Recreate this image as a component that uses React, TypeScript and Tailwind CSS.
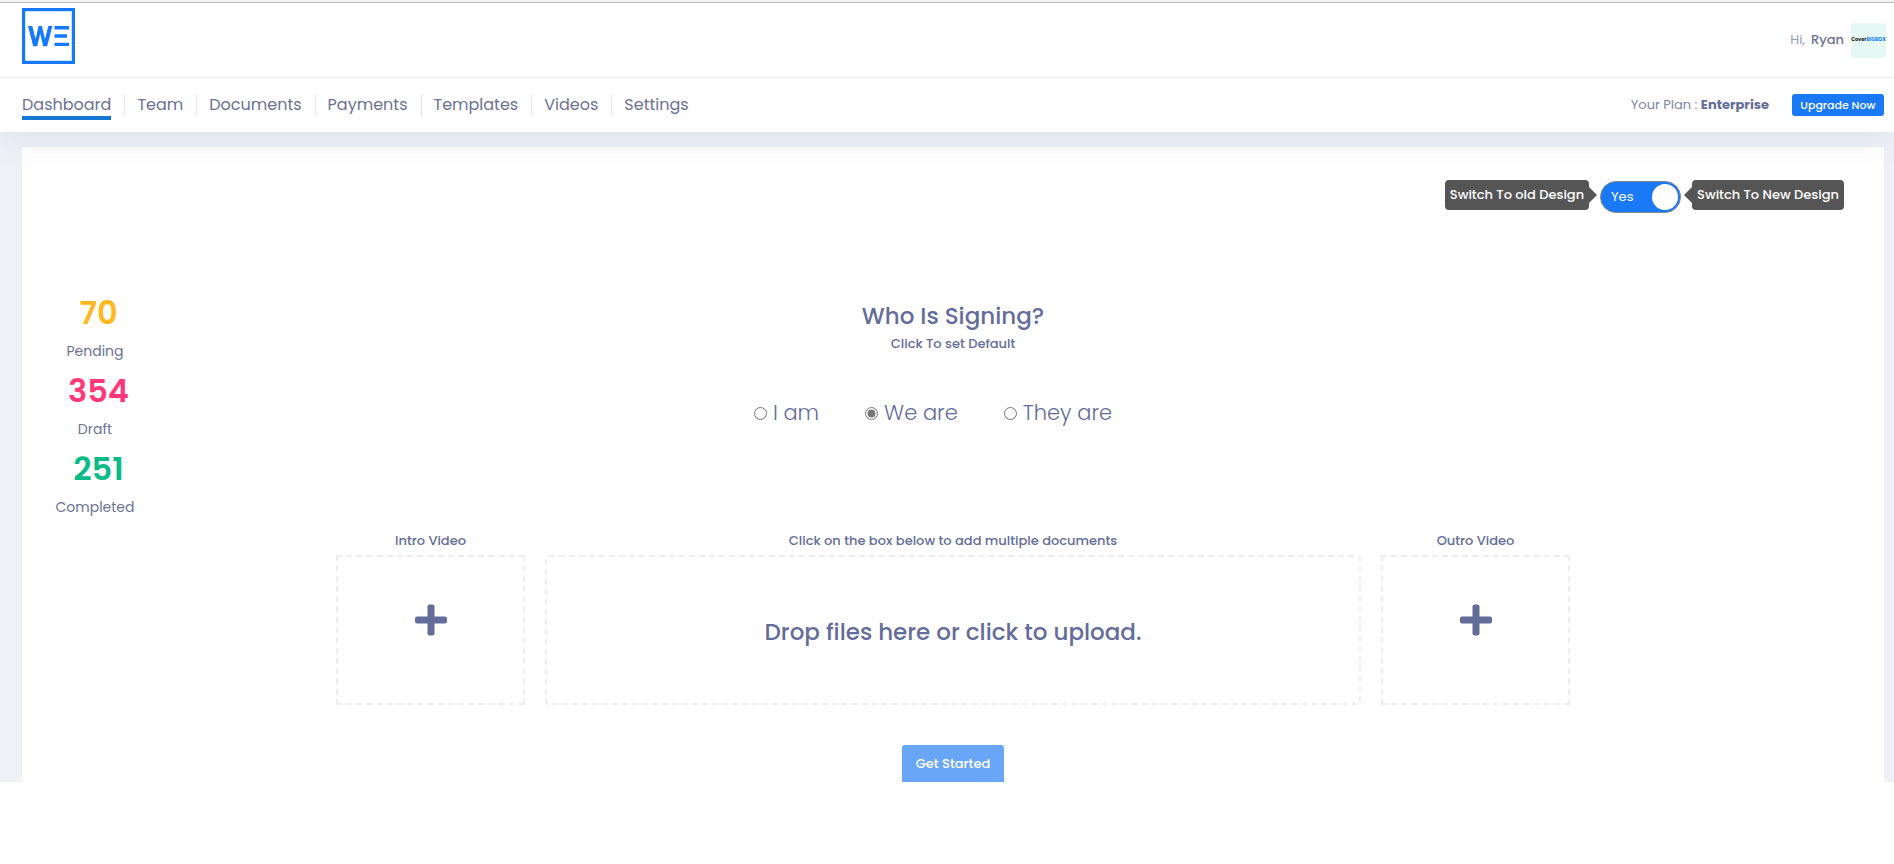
import { useState } from "react";

const navItems = ["Dashboard", "Team", "Documents", "Payments", "Templates", "Videos", "Settings"];

const stats = [
  { value: 70, label: "Pending", color: "text-[#ffb822]" },
  { value: 354, label: "Draft", color: "text-[#fd397a]" },
  { value: 251, label: "Completed", color: "text-[#0abb87]" },
];

const signers = ["I am", "We are", "They are"];

function Logo() {
  return (
    <svg viewBox="0 0 53 56" className="h-14 w-[53px]" role="img" aria-label="WE">
      <rect x="1.6" y="1.6" width="49.8" height="52.8" fill="none" stroke="#1678fb" strokeWidth="3.2" />
      <path
        fill="#1678fb"
        d="M6 18H10.3L13.6 31L16.6 18H19.9L23 31L26.3 18H30.4L25.2 38.2H21.2L18.2 25.8L15.2 38.2H11.2Z"
      />
      <path d="M32.5 19.7H47M32.5 28H45M32.5 36.4H47" fill="none" stroke="#1678fb" strokeWidth="3.4" />
    </svg>
  );
}

function PlusIcon() {
  return (
    <svg viewBox="0 0 32 32" className="size-8" fill="#646c9a" aria-hidden="true">
      <rect x="12.5" y="0.5" width="7" height="31" rx="2" />
      <rect x="0" y="12.5" width="32" height="7" rx="2" />
    </svg>
  );
}

function VideoBox({ title }: { title: string }) {
  return (
    <div className="w-[189px] shrink-0 text-center">
      <h5 className="mb-1 text-[13px] font-medium leading-5 text-[#646c9a]">{title}</h5>
      <button
        aria-label={`Add ${title}`}
        className="flex h-[150px] w-full items-center justify-center border-2 border-dashed border-[#ebedf2] pb-5"
      >
        <PlusIcon />
      </button>
    </div>
  );
}

export default function App() {
  const [signer, setSigner] = useState("We are");
  const [newDesign, setNewDesign] = useState(true);

  return (
    <div className="min-h-screen bg-white font-['Poppins','Inter',sans-serif] text-[#646c9a]">
      <div className="h-[3px] border-b border-[#c0c0c0] bg-[#f5f5f5]" />

      <header className="relative z-10 bg-white shadow-[0_10px_30px_0_rgba(82,63,105,0.08)]">
        <div className="flex h-[75px] items-center justify-between border-b border-[#ebedf2] pl-[22px] pr-2">
          <a href="#home" className="pb-2">
            <Logo />
          </a>
          <div className="flex items-center text-[13px]">
            <span className="text-[#959cb6]">Hi,</span>
            <span className="ml-1.5 font-medium text-[#6c7293]">Ryan</span>
            <span className="ml-[7px] flex size-[35px] items-center justify-center overflow-hidden rounded bg-[#e6f8f3] text-[5px] font-bold text-[#222]">
              Cover<span className="text-[#1b84ff]">BIGBOX</span>
            </span>
          </div>
        </div>

        <div className="flex h-[54px] items-center justify-between pl-[22px] pr-[10px]">
          <nav className="flex items-center divide-x divide-[#e2e5ec] text-base text-[#6c7293]">
            {navItems.map((item, i) => (
              <div key={item} className="flex h-[22px] items-center pl-3 pr-[13px] first:pl-0">
                <a
                  href={`#${item.toLowerCase()}`}
                  className={i === 0 ? "mt-1 border-b-4 border-[#1678d3] leading-[22px]" : "leading-[22px]"}
                >
                  {item}
                </a>
              </div>
            ))}
          </nav>
          <div className="flex items-center gap-[23px]">
            <p className="text-[13px] text-[#7d84aa]">
              Your Plan : <strong className="font-bold text-[#646c9a]">Enterprise</strong>
            </p>
            <button className="h-[22px] w-[92px] rounded-[3px] bg-[#1a79f7] text-[11px] font-medium text-white">Upgrade Now</button>
          </div>
        </div>
      </header>

      <main className="bg-[#f0f1f7] pl-[22px] pr-[10px] pt-[15px]">
        <section className="bg-white pt-[33px]">
          <div className="flex items-start justify-end pr-10 text-[13px] font-medium text-white">
            <div className="flex items-center">
              <span className="flex h-[30px] w-[144px] items-center justify-center rounded bg-[#555]">Switch To old Design</span>
              <span className="border-y-8 border-l-8 border-y-transparent border-l-[#555]" />
            </div>
            <label className="relative mx-[3px] mt-px flex h-8 w-[81px] cursor-pointer items-center justify-between rounded-full border border-[#808890] bg-[#1a79f7] pl-[10px] pr-[2px] font-normal has-focus-visible:outline-2">
              <input
                type="checkbox"
                aria-label="Use new design"
                checked={newDesign}
                onChange={(e) => setNewDesign(e.target.checked)}
                className="sr-only"
              />
              <span>{newDesign ? "Yes" : "No"}</span>
              <span className="size-[26px] rounded-full bg-white" />
            </label>
            <div className="flex items-center">
              <span className="border-y-8 border-r-8 border-y-transparent border-r-[#555]" />
              <span className="flex h-[30px] w-[152px] items-center justify-center rounded bg-[#555]">Switch To New Design</span>
            </div>
          </div>

          <div className="mt-[81px] grid grid-cols-[1fr_minmax(0,1234px)_1fr]">
            <dl className="w-[146px] text-center">
              {stats.map((s) => (
                <div key={s.label} className="flex h-[78px] flex-col-reverse justify-end">
                  <dt className="mt-[7px] text-[14px] leading-6 text-[#6c7293]">{s.label}</dt>
                  <dd className={`pl-[7px] text-[32px] font-semibold leading-[38px] ${s.color}`}>{s.value}</dd>
                </div>
              ))}
            </dl>

            <div className="flex flex-col items-center">
              <h3 className="mt-1 text-[23px] font-medium leading-9">Who Is Signing?</h3>
              <p className="text-[13px] font-medium leading-5">Click To set Default</p>
              <fieldset aria-label="Who Is Signing?" className="mt-[43px] flex gap-[46px] pr-10">
                {signers.map((s) => (
                  <label key={s} className="flex items-center gap-[6px] text-[21px] font-light leading-8">
                    <input
                      type="radio"
                      name="signer"
                      checked={signer === s}
                      onChange={() => setSigner(s)}
                      className="size-[13px] accent-[#767676]"
                    />
                    {s}
                  </label>
                ))}
              </fieldset>

              <div className="mt-[102px] flex w-full gap-5">
                <VideoBox title="Intro Video" />
                <div className="min-w-0 flex-1 text-center">
                  <h5 className="mb-1 text-[13px] font-medium leading-5">Click on the box below to add multiple documents</h5>
                  <button className="flex h-[150px] w-full items-center justify-center rounded border-2 border-dashed border-[#ebedf2] pt-1 text-[23px] font-medium">
                    Drop files here or click to upload.
                  </button>
                </div>
                <VideoBox title="Outro Video" />
              </div>

              <button className="mt-10 h-[37px] w-[102px] rounded-t-[3px] bg-[#6aa6f8] text-[13px] font-medium text-white">Get Started</button>
            </div>
          </div>
        </section>
      </main>
    </div>
  );
}
